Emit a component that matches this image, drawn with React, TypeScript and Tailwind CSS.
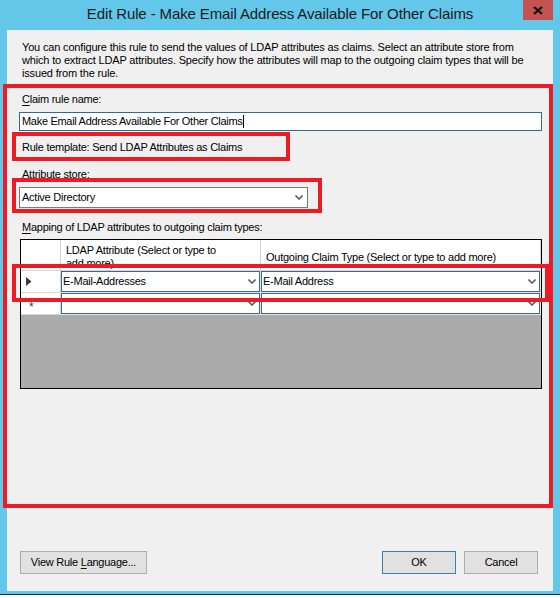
import React from "react";

function Chevron() {
  return (
    <svg width="8" height="5" viewBox="0 0 8 5" className="shrink-0">
      <polyline points="0.5,0.5 4,4 7.5,0.5" fill="none" stroke="#5f5f5f" strokeWidth="1.6" />
    </svg>
  );
}

function DataRow({ marker, a, b }: { marker: "arrow" | "star"; a?: string; b?: string }) {
  return (
    <div className="flex h-[22px] shrink-0">
      <div className="relative w-[40px] bg-white border-r border-b border-[#d4d4d4] flex items-center pl-[5px]">
        {marker === "arrow" ? (
          <svg width="6" height="9" viewBox="0 0 6 9">
            <polygon points="0,0 5.5,4.5 0,9" fill="#3a3a3a" />
          </svg>
        ) : (
          <span className="ml-[3px] mt-[6px] text-[12px] leading-none text-[#3a3a3a]">*</span>
        )}
      </div>
      <div className="w-[200px] border-r border-b border-[#e4e4e4] bg-white">
        <div className="h-full border border-[#3b6a94] bg-white flex items-center justify-between pl-px pr-[3px]">
          <span className="whitespace-nowrap">{a ?? ""}</span>
          <Chevron />
        </div>
      </div>
      <div className="w-[280px] border-r border-b border-[#e4e4e4] bg-white">
        <div className="h-full border border-[#3b6a94] bg-white flex items-center justify-between pl-px pr-[3px]">
          <span className="whitespace-nowrap">{b ?? ""}</span>
          <Chevron />
        </div>
      </div>
    </div>
  );
}

export default function App() {
  return (
    <div className="relative w-[560px] h-[598px] bg-white overflow-hidden font-['Liberation_Sans',Arial,sans-serif] text-[11px] tracking-[-0.25px] text-black">
      <div className="h-[594px] bg-[#63c7e9] flex flex-col">
        {/* Title bar */}
        <div className="relative h-[30px] shrink-0">
          <div className="pt-[5px] text-center text-[15px] leading-[17px] tracking-[-0.12px] text-[#1b1b1b] whitespace-nowrap">
            Edit Rule - Make Email Address Available For Other Claims
          </div>
          <div className="absolute right-[7px] top-0 w-[30px] h-[20px] bg-[#c75050] flex items-center justify-center">
            <svg width="10" height="9" viewBox="0 0 10 9">
              <line x1="1" y1="1" x2="9" y2="8" stroke="#111" strokeWidth="2.2" />
              <line x1="9" y1="1" x2="1" y2="8" stroke="#111" strokeWidth="2.2" />
            </svg>
          </div>
        </div>

        {/* Client area */}
        <div className="mx-[7px] h-[561px] shrink-0 bg-[#f0f0f0] flex flex-col pl-[12px] pr-[11px]">
          <div className="pt-[11px] pl-[3px] leading-[13px] whitespace-nowrap tracking-[-0.17px]">
            <div>You can configure this rule to send the values of LDAP attributes as claims. Select an attribute store from</div>
            <div>which to extract LDAP attributes. Specify how the attributes will map to the outgoing claim types that will be</div>
            <div>issued from the rule.</div>
          </div>

          <div className="mt-[13px] pl-[3px] leading-[13px]">
            <span className="underline underline-offset-2">C</span>laim rule name:
          </div>

          <div className="mt-[6px] h-[19px] border border-[#2f6a99] bg-white flex items-center pl-[2px] whitespace-nowrap tracking-[-0.3px]">
            Make Email Address Available For Other Claims
            <span className="ml-px inline-block w-px h-[13px] bg-black" />
          </div>

          <div className="mt-[10px] pl-[3px] leading-[13px] whitespace-nowrap">Rule template: Send LDAP Attributes as Claims</div>

          <div className="mt-[14px] pl-[3px] leading-[13px]">
            <span className="underline underline-offset-2">A</span>ttribute store:
          </div>

          <div className="mt-[6px] w-[289px] h-[21px] border border-[#7a7a7a] bg-white flex items-center justify-between pl-[2px] pr-[4px]">
            <span>Active Directory</span>
            <Chevron />
          </div>

          <div className="mt-[13px] pl-[3px] leading-[13px] whitespace-nowrap">
            <span className="underline underline-offset-2">M</span>apping of LDAP attributes to outgoing claim types:
          </div>

          {/* Grid */}
          <div className="ml-px mt-[5px] w-[522px] h-[150px] shrink-0 border border-black bg-[#ababab] overflow-hidden flex flex-col">
            <div className="flex h-[31px] shrink-0">
              <div className="w-[40px] bg-white border-r border-b border-[#d4d4d4]" />
              <div className="w-[200px] bg-white border-r border-b border-[#d4d4d4] pl-[5px] pt-[4px] overflow-hidden flex items-center">
                <div className="leading-[13px] whitespace-nowrap">
                  LDAP Attribute (Select or type to
                  <br />
                  add more)
                </div>
              </div>
              <div className="w-[280px] bg-white border-r border-b border-[#d4d4d4] pl-[5px] pt-[4px] overflow-hidden flex items-center">
                <div className="leading-[13px] whitespace-nowrap">Outgoing Claim Type (Select or type to add more)</div>
              </div>
            </div>
            <DataRow marker="arrow" a="E-Mail-Addresses" b="E-Mail Address" />
            <DataRow marker="star" />
          </div>

          <div className="flex-1" />

          {/* Buttons */}
          <div className="flex items-center justify-between pb-[17px] pr-[4px]">
            <button className="ml-px w-[127px] h-[23px] bg-[#e1e1e1] border border-[#adadad] text-[11px] leading-none">
              View Rule <span className="underline underline-offset-2">L</span>anguage...
            </button>
            <div className="flex gap-[8px]">
              <button className="w-[74px] h-[23px] bg-[#e1e1e1] border border-[#3c7fb1] text-[11px] leading-none">OK</button>
              <button className="w-[74px] h-[23px] bg-[#e1e1e1] border border-[#adadad] text-[11px] leading-none">Cancel</button>
            </div>
          </div>
        </div>
      </div>
      <div className="h-px bg-[#2a2a2a]" />

      {/* Red annotation boxes */}
      <div className="absolute left-[3px] top-[84px] w-[550px] h-[424px] border-4 border-[#ed1c24] pointer-events-none" />
      <div className="absolute left-[12px] top-[132px] w-[278px] h-[29px] border-4 border-[#ed1c24] pointer-events-none" />
      <div className="absolute left-[12px] top-[178px] w-[310px] h-[35px] border-4 border-[#ed1c24] pointer-events-none" />
      <div className="absolute left-[12px] top-[264px] w-[537px] h-[38px] border-4 border-[#ed1c24] pointer-events-none" />
    </div>
  );
}
